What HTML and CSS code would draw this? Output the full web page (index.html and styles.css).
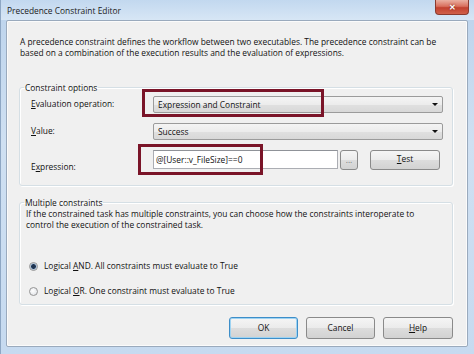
FILE: index.html
```html
<!DOCTYPE html>
<html lang="en">
<head>
  <meta charset="UTF-8">
  <title>Precedence Constraint Editor</title>
  <link rel="stylesheet" href="styles.css">
</head>
<body>

<div class="window">
  <div class="titlebar">
    <span class="title">Precedence Constraint Editor</span>
    <span class="close">&#x2715;</span>
  </div>

  <div class="client">
    <p class="intro">A precedence constraint defines the workflow between two executables. The precedence constraint can be<br>based on a combination of the execution results and the evaluation of expressions.</p>

    <fieldset class="group options">
      <legend>Constraint options</legend>
      <div class="row first">
        <label class="field-label"><u>E</u>valuation operation:</label>
        <div class="combo">Expression and Constraint<span class="arrow"></span></div>
      </div>
      <div class="row">
        <label class="field-label"><u>V</u>alue:</label>
        <div class="combo">Success<span class="arrow"></span></div>
      </div>
      <div class="row expr">
        <label class="field-label low">E<u>x</u>pression:</label>
        <div class="textbox">@[User::v_FileSize]==0</div>
        <button class="btn dots">...</button>
        <button class="btn test"><u>T</u>est</button>
      </div>
    </fieldset>

    <fieldset class="group multi">
      <legend>Multiple constraints</legend>
      <p class="note">If the constrained task has multiple constraints, you can choose how the constraints interoperate to<br>control the execution of the constrained task.</p>
      <div class="radio-row and">
        <span class="radio checked"></span>
        <span>Logical <u>A</u>ND. All constraints must evaluate to True</span>
      </div>
      <div class="radio-row">
        <span class="radio"></span>
        <span>Logical <u>O</u>R. One constraint must evaluate to True</span>
      </div>
    </fieldset>

    <div class="buttons">
      <button class="btn action default">OK</button>
      <button class="btn action">Cancel</button>
      <button class="btn action help"><u>H</u>elp</button>
    </div>
  </div>

  <!-- highlight marks drawn over the dialog -->
  <div class="mark mark-eval"></div>
  <div class="mark mark-expr"></div>
</div>

</body>
</html>
```

FILE: styles.css
```css
body {
  margin: 0;
  font-family: "Open Sans", "Noto Sans", Arial, sans-serif;
  font-size: 8.4px;
  line-height: 10.5px;
  color: #111;
}

u {
  text-decoration-thickness: 1px;
  text-underline-offset: 1px;
}

.window {
  position: relative;
  width: 474px;
  height: 354px;
  box-sizing: border-box;
  padding: 0 6px 7px 5px;
  display: flex;
  flex-direction: column;
  background: linear-gradient(#bcd3ec, #cfe0f2 40%, #c6daf0);
  border-left: 1px solid #8ea7c4;
}

.titlebar {
  height: 20px;
  flex: 0 0 auto;
  display: flex;
  align-items: flex-start;
  background: linear-gradient(#c2d8ef, #d7e6f5);
  margin: 0 -6px 0 -5px;
  padding: 0 6px 0 6px;
}

.title {
  padding-top: 6px;
  color: #1b1b1b;
}

.close {
  margin-left: auto;
  margin-right: -1px;
  width: 34px;
  height: 15px;
  box-sizing: border-box;
  border: 1px solid #8b3a2e;
  border-top: none;
  border-radius: 0 0 4px 4px;
  background: linear-gradient(#eab0a2, #d9705e 45%, #c2412f 55%, #d0604a);
  color: #fff;
  font-size: 8px;
  font-weight: bold;
  line-height: 14px;
  text-align: center;
  text-shadow: 0 0 2px #6a1a10;
}

.client {
  flex: 1 1 auto;
  background: #f0f0f0;
  border: 1px solid #9aaabd;
  border-radius: 2px;
  box-shadow: inset 0 0 0 1px #fbfbfb;
  padding: 0 14px 0 12px;
  display: flex;
  flex-direction: column;
}

.intro {
  margin: 16px 0 0 1px;
}

.group {
  margin: 0;
  padding: 0 9px 0 11px;
  border: 1px solid #d5dfe5;
  border-radius: 3px;
  box-shadow: inset 1px 1px 0 #fff, 1px 1px 0 #fff;
  min-width: 0;
}

.group legend {
  padding: 0 1px;
  margin-left: -7px;
  line-height: 11px;
}

.options {
  margin-top: 24px;
  padding-bottom: 16px;
}

.row {
  display: flex;
  align-items: center;
  margin-top: 10px;
}

.row.first {
  margin-top: 3px;
}

.field-label {
  width: 122px;
  flex: 0 0 auto;
}

.field-label.low {
  align-self: flex-end;
  margin-bottom: -3px;
}

.combo {
  position: relative;
  flex: 1 1 auto;
  height: 17px;
  box-sizing: border-box;
  border: 1px solid #9b9b9b;
  border-radius: 2px;
  padding-left: 4px;
  line-height: 15px;
  background: linear-gradient(#f4f4f4, #ececec 50%, #e0e0e0 51%, #d8d8d8);
}

.arrow {
  position: absolute;
  right: 4px;
  top: 6px;
  border-left: 3px solid transparent;
  border-right: 3px solid transparent;
  border-top: 3px solid #111;
}

.expr {
  height: 19px;
}

.textbox {
  width: 185px;
  height: 19px;
  box-sizing: border-box;
  border: 1px solid #abadb3;
  border-top-color: #8f9298;
  background: #fff;
  padding-left: 2px;
  line-height: 17px;
}

.btn {
  font: inherit;
  color: #111;
  box-sizing: border-box;
  border: 1px solid #8a8a8a;
  border-radius: 3px;
  background: linear-gradient(#f5f5f5, #ebebeb 50%, #dddddd 51%, #d2d2d2);
  padding: 0;
}

.dots {
  width: 18px;
  height: 20px;
  margin-left: 2px;
  color: #777;
  line-height: 12px;
}

.test {
  width: 70px;
  height: 20px;
  margin-left: 12px;
}

.multi {
  margin-top: 11px;
  padding-bottom: 6px;
}

.note {
  margin: 1px 0 0 -5px;
}

.radio-row {
  display: flex;
  align-items: center;
  gap: 6px;
  height: 13px;
  margin-top: 12px;
  margin-left: -2px;
}

.radio-row.and {
  margin-top: 30px;
}

.radio {
  width: 9px;
  height: 9px;
  box-sizing: border-box;
  border-radius: 50%;
  border: 1px solid #949494;
  background: radial-gradient(circle at 40% 40%, #ffffff, #dadde2);
}

.radio.checked {
  background: radial-gradient(circle, #1f3350 0 2px, #7c9cbf 2.5px, #e4e9ef 3.5px);
}

.buttons {
  display: flex;
  justify-content: flex-end;
  gap: 8px;
  margin-top: 12px;
}

.action {
  width: 69px;
  height: 22px;
}

.action.default {
  border-color: #3d8ec9;
  box-shadow: inset 0 0 0 1px #9ed3f2;
}

.action.help {
  width: 70px;
}

.mark {
  position: absolute;
  border: 3px solid #7a1428;
  box-sizing: border-box;
}

.mark-eval {
  left: 141px;
  top: 89px;
  width: 182px;
  height: 28px;
}

.mark-expr {
  left: 137px;
  top: 144px;
  width: 125px;
  height: 31px;
}
```
